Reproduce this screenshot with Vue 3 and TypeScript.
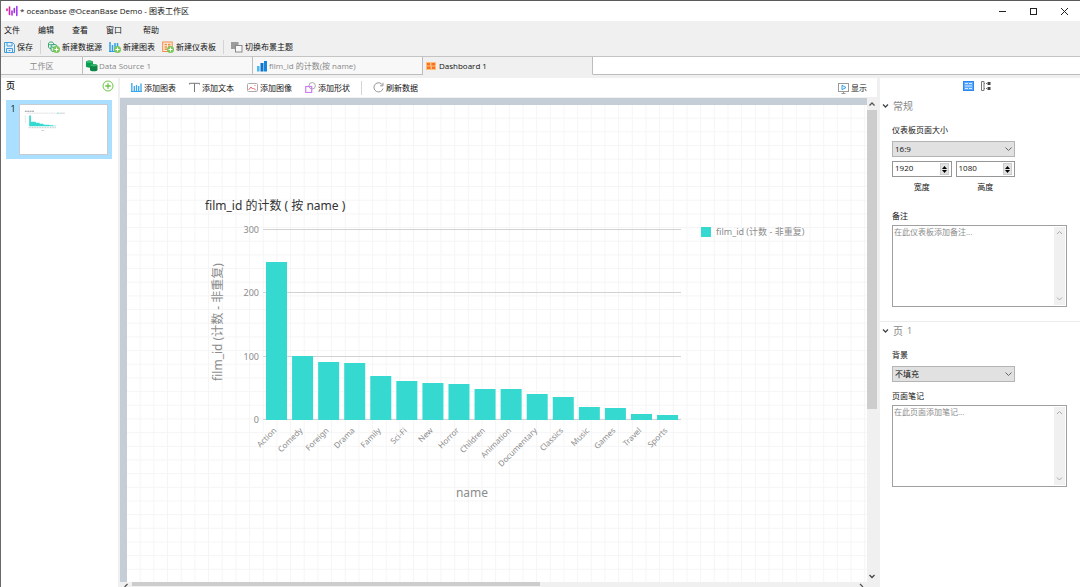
<script setup lang="ts">
import { ref } from 'vue'

interface Bar {
  name: string
  top: number
}

const menus: string[] = ['文件', '编辑', '查看', '窗口', '帮助']

const baseline = 315
const bars: Bar[] = [
  { name: 'Action', top: 157 },
  { name: 'Comedy', top: 251 },
  { name: 'Foreign', top: 257 },
  { name: 'Drama', top: 258 },
  { name: 'Family', top: 271 },
  { name: 'Sci-Fi', top: 276 },
  { name: 'New', top: 278 },
  { name: 'Horror', top: 279 },
  { name: 'Children', top: 284 },
  { name: 'Animation', top: 284 },
  { name: 'Documentary', top: 289 },
  { name: 'Classics', top: 292 },
  { name: 'Music', top: 302 },
  { name: 'Games', top: 303 },
  { name: 'Travel', top: 309 },
  { name: 'Sports', top: 310 },
]
const ticks = [
  { label: '300', y: 125 },
  { label: '200', y: 188 },
  { label: '100', y: 252 },
  { label: '0', y: 315 },
]
const barX = (i: number): number => 139 + i * 26.07

const ratio = ref('16:9')
const fill = ref('不填充')
const pageWidth = ref(1920)
const pageHeight = ref(1080)
const dashboardNote = ref('')
const pageNote = ref('')
</script>

<template>
  <div class="window">
    <header class="titlebar">
      <svg class="logo" width="12" height="12" viewBox="0 0 12 12" fill="none" stroke-width="1.600" stroke-linecap="round">
        <path d="M1 4v1.500" stroke="#e0218a" />
        <path d="M3.500 2v7.500" stroke="#d31fb0" />
        <path d="M6 6v4" stroke="#b32be0" />
        <path d="M8.300 3.500v4" stroke="#9a35ea" />
        <path d="M10.800 1.500v9" stroke="#a23cf0" />
      </svg>
      <h1>* oceanbase @OceanBase Demo - 图表工作区</h1>
      <div class="controls">
        <button aria-label="最小化"><svg width="9" height="9" viewBox="0 0 9 9"><path d="M1 4.500h7" stroke="#222" /></svg></button>
        <button aria-label="最大化"><svg width="9" height="9" viewBox="0 0 9 9"><rect x="1.500" y="1.500" width="6" height="6" fill="none" stroke="#222" /></svg></button>
        <button aria-label="关闭"><svg width="9" height="9" viewBox="0 0 9 9"><path d="M1 1l7 7M8 1l-7 7" stroke="#222" /></svg></button>
      </div>
    </header>

    <nav class="menubar">
      <button v-for="m in menus" :key="m">{{ m }}</button>
    </nav>

    <div class="toolbar">
      <button>
        <svg width="11" height="12" viewBox="0 0 11 12" fill="none" stroke="#4a9cd8"><path d="M.5 1.500h8l2 2v8H.5z" fill="#e3f2fd" /><path d="M3 1.500v3.500h5V1.500M2.500 11.500V7.500h6v4M4.500 9.500h2" /></svg>
        <span>保存</span>
      </button>
      <i class="sep"></i>
      <button>
        <svg width="12" height="12" viewBox="0 0 12 12" fill="none"><path d="M.5 2.500v3.500c0 2 5 2 5 0V2.500c0-2-5-2-5 0c0 1.800 5 1.800 5 0" stroke="#3aa676" /><path d="M3 5.500v3.500c0 2 6 2 6 0V5c0-2-6-2-6 0c0 1.800 6 1.800 6 0" stroke="#3aa676" fill="#cfeede" /><circle cx="8.500" cy="8.500" r="3.500" fill="#7cc65a" /><path d="M6.500 8.500h4M8.500 6.500v4" stroke="#fff" /></svg>
        <span>新建数据源</span>
      </button>
      <button>
        <svg width="12" height="12" viewBox="0 0 12 12" fill="none"><path d="M1 1v9M3.500 4v6M6 2v8M8.500 2v4" stroke="#2f9fe8" stroke-width="1.500" /><path d="M0 10.500h6" stroke="#2f9fe8" /><circle cx="8.500" cy="8.500" r="3.500" fill="#7cc65a" /><path d="M6.500 8.500h4M8.500 6.500v4" stroke="#fff" /></svg>
        <span>新建图表</span>
      </button>
      <button>
        <svg width="12" height="12" viewBox="0 0 12 12" fill="none"><rect x=".7" y="1" width="9.500" height="9.500" fill="#fff0de" stroke="#f08a4b" /><path d="M2.500 3.500h2.500M6 3.500h2.500M2.500 6h2.500M6 5.500h2.500M2.500 8.300h3" stroke="#f08a4b" stroke-width="1.500" /><circle cx="8.500" cy="8.500" r="3.500" fill="#7cc65a" /><path d="M6.500 8.500h4M8.500 6.500v4" stroke="#fff" /></svg>
        <span>新建仪表板</span>
      </button>
      <i class="sep"></i>
      <button>
        <svg width="12" height="12" viewBox="0 0 12 12"><rect x="0" y="1" width="7.500" height="7" fill="#9c9c9c" /><rect x="4.500" y="4.500" width="6.500" height="6.500" fill="#f8f8f8" stroke="#888" /></svg>
        <span>切换布景主题</span>
      </button>
    </div>

    <div class="tabs" role="tablist">
      <button role="tab" class="tab home">工作区</button>
      <button role="tab" class="tab">
        <svg width="12" height="12" viewBox="0 0 12 12"><path d="M0 2c0-2 7-2 7 0v4.500c0 1.500-7 1.500-7 0z" fill="#0a9f50" /><path d="M4 5.500c0-1.800 7.500-1.800 7.500 0v4.500c0 1.800-7.500 1.800-7.500 0z" fill="#0d8545" /><ellipse cx="3.500" cy="1.900" rx="3.300" ry="1.100" fill="#37b870" /><ellipse cx="7.700" cy="5.300" rx="3.500" ry="1.100" fill="#37b870" /></svg>
        <span>Data Source 1</span>
      </button>
      <button role="tab" class="tab">
        <svg width="12" height="12" viewBox="0 0 12 12"><rect x="1" y="6" width="2.500" height="5.500" fill="#45b8f5" /><rect x="4.500" y="3" width="3" height="8.500" fill="#1173c8" /><rect x="8" y="1" width="3" height="10.500" fill="#1686dd" /></svg>
        <span>film_id 的计数(按 name)</span>
      </button>
      <button role="tab" class="tab active" aria-selected="true">
        <svg width="10" height="10" viewBox="0 0 10 10"><rect y="1" width="10" height="8" fill="#ffc078" /><path d="M1 2h3v2.500H1zM5.500 2h3.500v2.500H5.500zM1 5.500h3.500V8H1zM6 5.500h3V8H6z" fill="#f5702a" /></svg>
        <span>Dashboard 1</span>
      </button>
      <div class="tab-rest"></div>
    </div>

    <main class="body">
      <aside class="pages">
        <div class="pages-head">
          <h2>页</h2>
          <button aria-label="添加页"><svg width="12" height="12" viewBox="0 0 12 12" fill="none" stroke="#6cc644"><circle cx="6" cy="6" r="5" /><path d="M3.200 6h5.600M6 3.200v5.600" stroke-width="1.300" /></svg></button>
        </div>
        <button class="page-item">
          <span>1</span>
          <svg class="thumb" viewBox="0 0 90 51" preserveAspectRatio="none" fill="none">
            <path d="M5 6.500h10" stroke="#777" stroke-dasharray="2 .5" stroke-width=".8" />
            <path d="M7 8.500h31M5.500 11v8" stroke="#ccc" stroke-width=".6" stroke-dasharray="2 .5" />
            <path d="M38.500 8.500h1.500" stroke="#35d9d0" />
            <path d="M40.500 8.500h6M22 26.500h3" stroke="#bbb" stroke-width=".7" />
            <path d="M9.500 22V11h1.800v6.500h5V18.500h4v1h4v1h6v.5h4v.7h3v.3z" fill="#35d9d0" />
            <path d="M9 23.500h28" stroke="#ccc" stroke-dasharray="1 .7" stroke-width="1.200" />
          </svg>
        </button>
      </aside>

      <section class="editor">
        <div class="edit-tools">
          <button>
            <svg width="11" height="11" viewBox="0 0 11 11" fill="none"><path d="M.8 1v8M3.300 4v5M5.500 3v6M7.700 4v5M10 1.500v7.500" stroke="#38a6ee" stroke-width="1.300" /><path d="M0 9.500h11" stroke="#38a6ee" /></svg>
            <span>添加图表</span>
          </button>
          <button>
            <svg width="11" height="11" viewBox="0 0 11 11" fill="none" stroke="#777"><path d="M.5 2.500V1.300h10v1.200M5.500 1.300V10" /></svg>
            <span>添加文本</span>
          </button>
          <button>
            <svg width="11" height="11" viewBox="0 0 11 11" fill="none"><rect x=".5" y="1.500" width="10" height="8" rx="1" stroke="#aaa" /><path d="M1.500 8l2.500-3 1.500 2 1-1 2.500 2.500M7.500 3.500h1" stroke="#ec6a73" /></svg>
            <span>添加图像</span>
          </button>
          <button>
            <svg width="11" height="11" viewBox="0 0 11 11" fill="none"><circle cx="7.200" cy="3.800" r="3.200" stroke="#aaa" /><rect x=".7" y="4.500" width="6" height="6" stroke="#cc7ef0" stroke-width="1.200" /></svg>
            <span>添加形状</span>
          </button>
          <i class="sep"></i>
          <button>
            <svg width="11" height="11" viewBox="0 0 11 11" fill="none" stroke="#999"><path d="M9.500 3A4.600 4.600 0 1 0 10 6.500M10 .8v3H7" /></svg>
            <span>刷新数据</span>
          </button>
          <button class="show">
            <svg width="11" height="12" viewBox="0 0 11 12" fill="none"><rect x=".5" y="1.500" width="10" height="8" stroke="#999" /><path d="M4 3.300l4 2.200-4 2.200z" stroke="#2f9fe8" /><path d="M5.500 9.500v2M3.500 11.500h4" stroke="#999" /></svg>
            <span>显示</span>
          </button>
        </div>

        <div class="work">
          <div class="canvas">
            <svg class="sheet" width="100%" height="100%">
              <defs>
                <pattern id="grid" width="13.670" height="13.670" patternUnits="userSpaceOnUse">
                  <path d="M13.200 0v13.670M0 13.200h13.670" stroke="#f5f5f5" fill="none" />
                </pattern>
              </defs>
              <rect width="100%" height="100%" fill="#fff" />
              <rect width="100%" height="100%" fill="url(#grid)" />
              <text x="78" y="105" class="chart-title">film_id 的计数 ( 按 name )</text>
              <g v-for="t in ticks" :key="t.label">
                <path :d="`M136 ${t.y - 0.5}H554`" stroke="#d2d2d2" />
                <text x="132" :y="t.y + 3" class="tick" text-anchor="end">{{ t.label }}</text>
              </g>
              <g v-for="(b, i) in bars" :key="b.name">
                <rect :x="barX(i)" :y="b.top" width="21" :height="baseline - b.top" fill="#35d9d0" />
                <text class="category" text-anchor="end" :transform="`translate(${barX(i) + 11} 326) rotate(-45)`">{{ b.name }}</text>
              </g>
              <text class="axis" text-anchor="middle" transform="translate(95 217) rotate(-90)">film_id (计数 - 非重复)</text>
              <text class="name" text-anchor="middle" x="345" y="392">name</text>
              <rect x="574" y="122" width="10" height="10" fill="#35d9d0" />
              <text x="589" y="130" class="legend">film_id (计数 - 非重复)</text>
            </svg>
          </div>
          <div class="vscroll">
            <svg width="10" height="12" viewBox="0 0 10 12"><path d="M2.500 7.500L5 5l2.500 2.500" fill="none" stroke="#555" stroke-width="1.300" /></svg>
            <div class="track"><div class="grip"></div></div>
            <svg width="10" height="12" viewBox="0 0 10 12"><path d="M2.500 5L5 7.500 7.500 5" fill="none" stroke="#444" stroke-width="1.300" /></svg>
          </div>
        </div>
        <div class="hscroll">
          <svg width="12" height="5" viewBox="0 0 12 5"><path d="M7.500 2L5 4.500l2.500 2.500" fill="none" stroke="#555" stroke-width="1.300" /></svg>
          <div class="track"><div class="grip"></div></div>
          <svg width="12" height="5" viewBox="0 0 12 5"><path d="M5 2l2.500 2.500L5 7" fill="none" stroke="#555" stroke-width="1.300" /></svg>
        </div>
      </section>

      <aside class="props">
        <div class="props-tabs">
          <button aria-label="属性"><svg width="11" height="10" viewBox="0 0 11 10"><rect x=".5" y=".5" width="10" height="9" fill="#5aa8fb" stroke="#2a86f0" /><path d="M2 2.500h3M6 2.500h3M2 5h7M2 7.500h3M6 7.500h3" stroke="#d5e9ff" /></svg></button>
          <button aria-label="交互"><svg width="10" height="10" viewBox="0 0 10 10" fill="none" stroke="#777"><path d="M.5 .5h2.500v9H.5z" /><path d="M3 2.500h3M3 7.500h3" stroke-dasharray="1 1" /><path d="M6.500 2.500h3M6.500 7.500h3" stroke="#444" stroke-width="3" /></svg></button>
        </div>

        <section class="group">
          <h3><svg width="7" height="6" viewBox="0 0 7 6"><path d="M1 1.500L3.500 4 6 1.500" fill="none" stroke="#444" stroke-width="1.300" /></svg>常规</h3>
          <div class="fields">
            <label for="size">仪表板页面大小</label>
            <div class="select">
              <select id="size" v-model="ratio"><option>16:9</option><option>4:3</option></select>
              <svg width="7" height="6" viewBox="0 0 7 6"><path d="M.5 1.500l3 3 3-3" fill="none" stroke="#666" /></svg>
            </div>
            <div class="pair">
              <div>
                <div class="number">
                  <input id="pw" v-model="pageWidth" type="number" />
                  <span class="spin">
                    <button aria-label="增加宽度" @click="pageWidth++"><svg width="7" height="4" viewBox="0 0 7 4"><path d="M1 4l2.500-3L6 4z" /></svg></button>
                    <button aria-label="减少宽度" @click="pageWidth--"><svg width="7" height="4" viewBox="0 0 7 4"><path d="M1 0l2.500 3L6 0z" /></svg></button>
                  </span>
                </div>
                <label for="pw">宽度</label>
              </div>
              <div>
                <div class="number">
                  <input id="ph" v-model="pageHeight" type="number" />
                  <span class="spin">
                    <button aria-label="增加高度" @click="pageHeight++"><svg width="7" height="4" viewBox="0 0 7 4"><path d="M1 4l2.500-3L6 4z" /></svg></button>
                    <button aria-label="减少高度" @click="pageHeight--"><svg width="7" height="4" viewBox="0 0 7 4"><path d="M1 0l2.500 3L6 0z" /></svg></button>
                  </span>
                </div>
                <label for="ph">高度</label>
              </div>
            </div>
            <label for="note">备注</label>
            <div class="memo">
              <textarea id="note" v-model="dashboardNote" placeholder="在此仪表板添加备注..."></textarea>
              <span class="memo-bar">
                <svg width="7" height="6" viewBox="0 0 7 6"><path d="M1 4l2.500-2.500L6 4" /></svg>
                <svg width="7" height="6" viewBox="0 0 7 6"><path d="M1 1.500L3.500 4 6 1.500" /></svg>
              </span>
            </div>
          </div>
        </section>

        <section class="group second">
          <h3><svg width="7" height="6" viewBox="0 0 7 6"><path d="M1 1.500L3.500 4 6 1.500" fill="none" stroke="#444" stroke-width="1.300" /></svg>页 <small>1</small></h3>
          <div class="fields">
            <label for="bg">背景</label>
            <div class="select">
              <select id="bg" v-model="fill"><option>不填充</option><option>颜色</option></select>
              <svg width="7" height="6" viewBox="0 0 7 6"><path d="M.5 1.500l3 3 3-3" fill="none" stroke="#666" /></svg>
            </div>
            <label for="pnote">页面笔记</label>
            <div class="memo">
              <textarea id="pnote" v-model="pageNote" placeholder="在此页面添加笔记..."></textarea>
              <span class="memo-bar">
                <svg width="7" height="6" viewBox="0 0 7 6"><path d="M1 4l2.500-2.500L6 4" /></svg>
                <svg width="7" height="6" viewBox="0 0 7 6"><path d="M1 1.500L3.500 4 6 1.500" /></svg>
              </span>
            </div>
          </div>
        </section>
      </aside>
    </main>
  </div>
</template>

<style>
body {
  margin: 0;
}
</style>

<style scoped>
.window,
.window * {
  box-sizing: border-box;
}
.window {
  height: 100vh;
  display: flex;
  flex-direction: column;
  overflow: hidden;
  background: #f0f0f0;
  border-top: 1px solid #5a5a5a;
  border-left: 1px solid #6a6a6a;
  color: #111;
  font: 8px/12px "Open Sans", "Noto Sans CJK SC", sans-serif;
}
button {
  font: inherit;
  color: inherit;
  background: none;
  border: 0;
  margin: 0;
  padding: 0;
  display: flex;
  align-items: center;
  white-space: nowrap;
}
svg {
  display: block;
  flex: none;
}
h1,
h2,
h3 {
  margin: 0;
  font: inherit;
}
.titlebar {
  display: flex;
  align-items: center;
  height: 20px;
  background: #fff;
  padding-left: 5px;
  gap: 2px;
}
.controls {
  display: flex;
  margin-left: auto;
}
.controls button {
  width: 31px;
  height: 20px;
  justify-content: center;
}
.menubar {
  display: flex;
  gap: 18px;
  padding: 3px 3px 2px;
}
.menubar button {
  height: 12px;
}
.menubar button:last-child {
  margin-left: 3px;
}
.toolbar {
  display: flex;
  align-items: center;
  height: 18px;
  padding-left: 3px;
  gap: 7px;
}
.toolbar button {
  gap: 2px;
}
.sep {
  width: 1px;
  height: 14px;
  background: #d4d4d4;
}
.tabs {
  display: flex;
  height: 19px;
  border-top: 1px solid #c4c4c4;
}
.tab {
  flex: 0 1 170px;
  gap: 1px;
  padding-left: 3px;
  background: #f8f8f8;
  color: #888;
  border-right: 1px solid #bdbdbd;
  border-bottom: 1px solid #bdbdbd;
}
.tab.home {
  flex-basis: 82px;
  justify-content: center;
  padding: 0;
}
.tab.active {
  background: #f0f0f0;
  color: #111;
  border-bottom-color: #f0f0f0;
  gap: 3px;
}
.tab-rest {
  flex: 1;
  background: #fff;
  border-bottom: 1px solid #bdbdbd;
}
.body {
  flex: 1;
  min-height: 0;
  display: flex;
  gap: 2px;
  margin-top: 3px;
}
.pages {
  flex: none;
  width: 117px;
  background: #fff;
  padding: 2px 6px 0 5px;
}
.pages-head {
  display: flex;
  justify-content: space-between;
  align-items: center;
  height: 12px;
}
.pages-head h2 {
  font-size: 9px;
  font-weight: 500;
}
.pages-head button {
  margin-right: -2px;
}
.page-item {
  width: 100%;
  margin-top: 8px;
  padding: 4px;
  gap: 3px;
  background: #aadfff;
  align-items: flex-start;
}
.page-item span {
  width: 6px;
  font-size: 9px;
  line-height: 10px;
}
.thumb {
  flex: 1;
  min-width: 0;
  height: 51px;
  background: #fff;
  border: 1px solid #c6ccd2;
}
.editor {
  flex: 1;
  min-width: 0;
  display: flex;
  flex-direction: column;
}
.edit-tools {
  display: flex;
  align-items: center;
  height: 19px;
  margin-right: 3px;
  padding: 0 10px 0 11px;
  gap: 13px;
  background: #fff;
}
.edit-tools button {
  gap: 2px;
}
.edit-tools .sep {
  margin: 0 -2px;
}
.edit-tools .show {
  margin-left: auto;
}
.work {
  flex: 1;
  min-height: 0;
  display: flex;
  margin-top: 1px;
}
.canvas {
  flex: 1;
  min-width: 0;
  padding: 7px 0 0 7px;
  background: #c5cdd7;
}
.vscroll {
  width: 13px;
  padding-right: 3px;
  display: flex;
  flex-direction: column;
}
.track {
  flex: 1;
}
.vscroll .grip {
  width: 10px;
  height: 65%;
  background: #cdcdcd;
}
.hscroll {
  display: flex;
  height: 5px;
  margin-right: 13px;
}
.hscroll .grip {
  width: 56.5%;
  height: 4px;
  background: #cdcdcd;
}
.sheet text {
  font-family: "Noto Sans", "Noto Sans CJK SC", sans-serif;
  fill: #8c8c8c;
}
.sheet .chart-title {
  font-size: 12px;
  fill: #333;
}
.sheet .tick,
.sheet .legend {
  font-size: 9px;
}
.sheet .category {
  font-size: 8px;
}
.sheet .axis,
.sheet .name {
  font-size: 12px;
}
.props {
  flex: none;
  width: 200px;
  margin-left: -2px;
  background: #fff;
}
.props-tabs {
  display: flex;
  justify-content: center;
  gap: 7px;
  height: 20px;
  padding: 0 6px 4px 0;
}
.group h3 {
  display: flex;
  align-items: center;
  gap: 4px;
  padding-left: 2px;
  height: 16px;
  font-size: 10px;
  color: #888;
}
.group small {
  font-size: 9px;
}
.fields {
  display: flex;
  flex-direction: column;
  align-items: flex-start;
  padding: 10px 13px 14px 12px;
}
.fields label {
  height: 15px;
}
.second {
  border-top: 1px solid #ececec;
  padding-top: 1px;
}
.select {
  position: relative;
  width: 123px;
  margin: 2px 0 4px;
}
.second .select {
  margin-bottom: 8px;
}
.select select {
  appearance: none;
  display: block;
  width: 100%;
  height: 16px;
  padding: 0 2px;
  font: inherit;
  color: #111;
  background: #e1e1e1;
  border: 1px solid #b4b4b4;
  border-radius: 0;
}
.select svg {
  position: absolute;
  right: 3px;
  top: 5px;
  pointer-events: none;
}
.pair {
  display: grid;
  grid-template-columns: repeat(2, minmax(0, 1fr));
  gap: 4px;
  width: 123px;
  margin-bottom: 17px;
}
.pair label {
  display: block;
  height: 16px;
  text-align: center;
  padding-top: 4px;
}
.number {
  display: flex;
  height: 16px;
  border: 1px solid #969696;
  background: #fff;
}
.number input {
  flex: 1;
  min-width: 0;
  padding: 0 0 2px 2px;
  border: 0;
  background: none;
  font: inherit;
  color: #111;
  appearance: textfield;
}
.number input::-webkit-inner-spin-button {
  appearance: none;
  margin: 0;
}
.spin {
  display: flex;
  flex-direction: column;
  margin: 1px 2px;
  width: 9px;
  background: #e2e2e2;
  border: 1px solid #cdcdcd;
}
.spin button {
  flex: 1;
  justify-content: center;
}
.memo {
  display: flex;
  width: 100%;
  height: 82px;
  border: 1px solid #a0a0a0;
  background: #fff;
}
.memo textarea {
  flex: 1;
  min-width: 0;
  padding: 0 1px;
  border: 0;
  resize: none;
  overflow: hidden;
  background: none;
  font: inherit;
  color: #111;
}
.memo textarea::placeholder {
  color: #8c8c8c;
}
.memo-bar {
  display: flex;
  flex-direction: column;
  align-items: center;
  justify-content: space-between;
  width: 11px;
  margin: 1px;
  padding: 3px 0;
  background: #f0f0f0;
}
.memo-bar svg {
  fill: none;
  stroke: #aaa;
}
</style>
